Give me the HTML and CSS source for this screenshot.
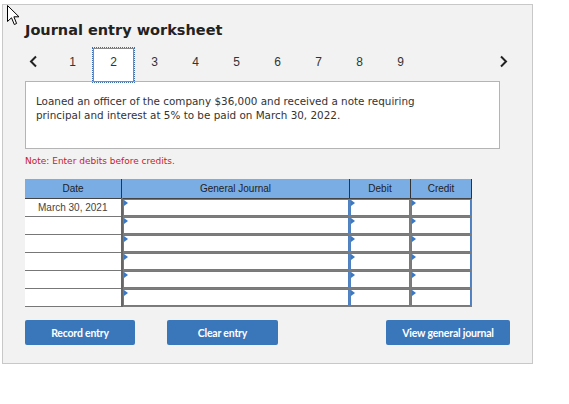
FILE: index.html
```html
<!DOCTYPE html>
<html>
<head>
    <title>Journal entry worksheet</title>
    <link rel="stylesheet" href="styles.css">
</head>
<body>
    <div class="panel">
        <h1 class="title">Journal entry worksheet</h1>
        <div class="tabs">
            <span class="arrow">
                <svg width="9" height="13" viewBox="0 0 9 13"><path d="M7 1.5 L2 6.5 L7 11.5" fill="none" stroke="#222" stroke-width="2"/></svg>
            </span>
            <span class="tab">1</span>
            <span class="tab active">2</span>
            <span class="tab">3</span>
            <span class="tab">4</span>
            <span class="tab">5</span>
            <span class="tab">6</span>
            <span class="tab">7</span>
            <span class="tab">8</span>
            <span class="tab">9</span>
            <span class="arrow next">
                <svg width="9" height="13" viewBox="0 0 9 13"><path d="M2 1.5 L7 6.5 L2 11.5" fill="none" stroke="#222" stroke-width="2"/></svg>
            </span>
        </div>
        <div class="question">
            Loaned an officer of the company $36,000 and received a note requiring<br>
            principal and interest at 5% to be paid on March 30, 2022.
        </div>
        <p class="note">Note: Enter debits before credits.</p>
        <table class="journal">
            <thead>
                <tr>
                    <th class="c-date">Date</th>
                    <th class="c-acct">General Journal</th>
                    <th class="c-num">Debit</th>
                    <th class="c-num">Credit</th>
                </tr>
            </thead>
            <tbody>
                <tr>
                    <td class="date">March 30, 2021</td>
                    <td class="cell"></td><td class="cell"></td><td class="cell"></td>
                </tr>
                <tr>
                    <td class="date"></td>
                    <td class="cell"></td><td class="cell"></td><td class="cell"></td>
                </tr>
                <tr>
                    <td class="date"></td>
                    <td class="cell"></td><td class="cell"></td><td class="cell"></td>
                </tr>
                <tr>
                    <td class="date"></td>
                    <td class="cell"></td><td class="cell"></td><td class="cell"></td>
                </tr>
                <tr>
                    <td class="date"></td>
                    <td class="cell"></td><td class="cell"></td><td class="cell"></td>
                </tr>
                <tr>
                    <td class="date"></td>
                    <td class="cell"></td><td class="cell"></td><td class="cell"></td>
                </tr>
            </tbody>
        </table>
        <div class="buttons">
            <button class="btn btn-record">Record entry</button>
            <button class="btn btn-clear">Clear entry</button>
            <button class="btn btn-view">View general journal</button>
        </div>
    </div>
    <svg class="cursor" width="13" height="21" viewBox="0 0 13 21">
        <path d="M0.5 0.5 L0.5 16.5 L4.5 12.8 L7.3 19.5 L9.6 18.5 L6.9 11.8 L12 11.8 Z" fill="#fff" stroke="#000" stroke-width="1"/>
    </svg>
</body>
</html>
```

FILE: styles.css
```css
body {
    margin: 0;
    font-family: "Liberation Sans", Arial, sans-serif;
    background: #fff;
}
.panel {
    margin: 4px 0 0 2px;
    width: 529px;
    height: 358px;
    border: 1px solid #c8c8c8;
    background: #f2f2f2;
}
.title {
    margin: 16px 0 0 22px;
    font-family: "DejaVu Sans", Verdana, sans-serif;
    font-size: 14.5px;
    font-weight: bold;
    line-height: 18px;
    color: #222;
}
.tabs {
    display: flex;
    height: 33px;
    margin-top: 9px;
    padding: 0 14px 0 15px;
}
.arrow {
    width: 30px;
    height: 27px;
    display: flex;
    align-items: center;
    justify-content: center;
    margin-right: 4px;
}
.arrow.next {
    margin-left: auto;
    margin-right: 0;
}
.tab {
    width: 41px;
    height: 28px;
    padding-top: 6px;
    box-sizing: border-box;
    text-align: center;
    font-size: 12px;
    line-height: 16px;
    color: #333;
}
.tab.active {
    height: 34px;
    padding-top: 5px;
    background: #fff;
    border: 1px solid #8a8a8a;
    outline: 1px dotted #3b6db5;
    position: relative;
    z-index: 1;
}
.question {
    margin: 0 0 0 22px;
    width: 453px;
    height: 45px;
    padding: 12px 10px 9px;
    border: 1px solid #b4b4b4;
    background: #fff;
    font-family: "DejaVu Sans", Verdana, sans-serif;
    font-size: 10.4px;
    line-height: 14px;
    color: #333;
}
.note {
    margin: 6px 0 0 22px;
    font-family: "DejaVu Sans", Verdana, sans-serif;
    font-size: 9px;
    line-height: 12px;
    color: #c8202a;
}
.journal {
    margin: 12px 0 0 22px;
    border-collapse: collapse;
    table-layout: fixed;
    width: 443px;
}
.journal th {
    height: 19px;
    padding: 0;
    background: #7aade4;
    border-right: 1px solid #333;
    border-bottom: 1px solid #444;
    font-size: 10px;
    font-weight: normal;
    color: #222;
}
.c-date { width: 96px; }
.c-acct { width: 227px; }
.c-num { width: 60px; }
.journal td {
    height: 18px;
    padding: 0;
    box-sizing: border-box;
}
.journal .date {
    background: #fff;
    border-right: 2px solid #666;
    border-bottom: 1px solid #777;
    text-align: center;
    font-size: 10px;
    color: #444;
}
.journal .cell {
    position: relative;
    background: #fff;
    border: 1px solid #7d7d7d;
    box-shadow: inset 0 0 0 1px #4f80c0;
}
.journal .cell::before {
    content: "";
    position: absolute;
    left: 1px;
    top: 1px;
    border-left: 4px solid #3b78c4;
    border-top: 3px solid transparent;
    border-bottom: 3px solid transparent;
}
.buttons {
    display: flex;
    margin: 13px 0 0 22px;
}
.btn {
    height: 25px;
    padding: 0;
    border: none;
    border-radius: 2px;
    background: #3a76ba;
    color: #fff;
    font-family: Lato, "Liberation Sans", sans-serif;
    font-size: 10.5px;
    font-weight: bold;
    letter-spacing: -0.2px;
}
.btn-record { width: 110px; }
.btn-clear { width: 111px; margin-left: 32px; }
.btn-view { width: 124px; margin-left: 108px; }
.cursor {
    position: absolute;
    left: 7px;
    top: 5px;
}
```
